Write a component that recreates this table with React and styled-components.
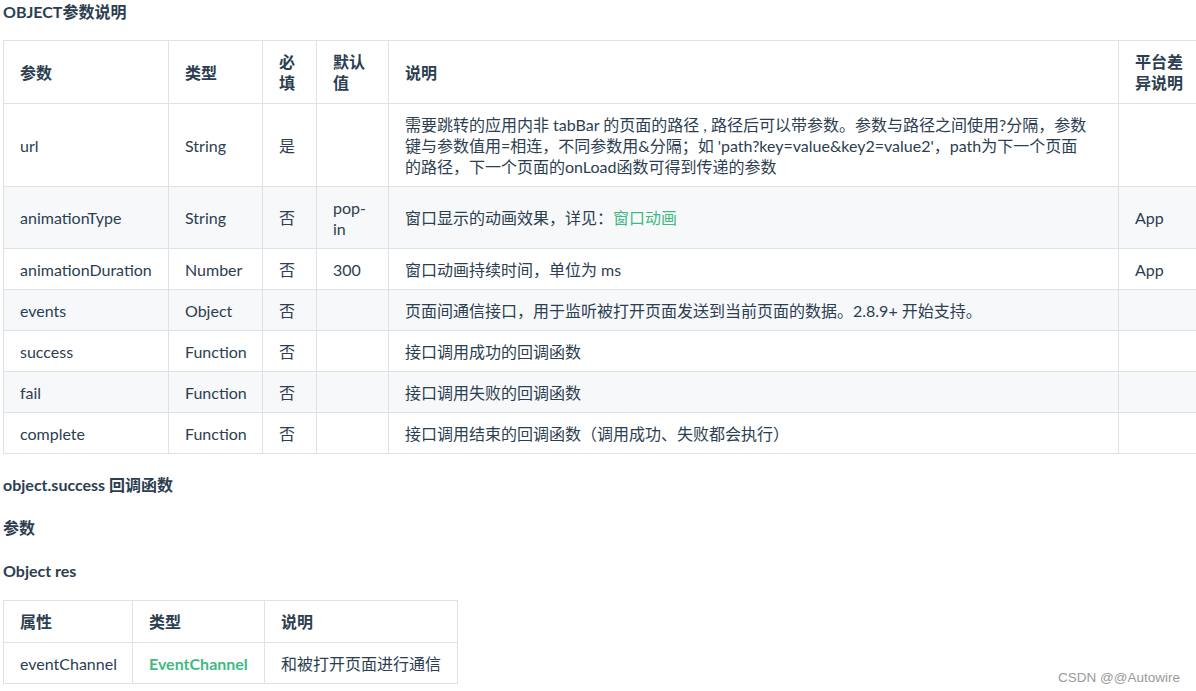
import React from 'react';
import styled, { createGlobalStyle } from 'styled-components';

const Global = createGlobalStyle`
  html, body {
    margin: 0;
    padding: 0;
    background: #fff;
    overflow: hidden;
  }
  body {
    font-family: Lato, "Noto Sans CJK SC", sans-serif;
    color: #2c3e50;
  }
`;

const Page = styled.div`
  position: relative;
  width: 1196px;
  height: 691px;
  overflow: hidden;
  padding: 1px 0 0 3px;
  box-sizing: border-box;
`;

const Heading = styled.div`
  font-size: 16px;
  line-height: 21px;
  font-weight: bold;
  margin-bottom: ${(p) => p.gap || 22}px;
`;

const Table = styled.table`
  border-collapse: collapse;
  table-layout: fixed;
  width: ${(p) => p.width}px;
  font-size: 16px;
  line-height: 21px;
  margin-bottom: ${(p) => p.gap || 0}px;
`;

const Th = styled.th`
  border: 1px solid #dfe2e5;
  padding: 10px 16px;
  text-align: left;
  font-weight: bold;
  vertical-align: middle;
`;

const Td = styled.td`
  border: 1px solid #dfe2e5;
  padding: 9.5px ${(p) => (p.$desc ? 28 : 16)}px 9.5px 16px;
  text-align: left;
  vertical-align: middle;
  word-break: normal;
  overflow-wrap: normal;
`;

const Tr = styled.tr`
  &:nth-child(2n) {
    background: #f6f8fa;
  }
`;

const Link = styled.span`
  color: #42b983;
  font-weight: ${(p) => (p.$bold ? 'bold' : 'normal')};
`;

const Watermark = styled.div`
  position: absolute;
  right: 16px;
  bottom: 6px;
  font-family: "Liberation Sans", Arial, sans-serif;
  font-size: 13.5px;
  color: #9a9a9a;
`;

const params = [
  {
    name: 'url',
    type: 'String',
    req: '是',
    def: '',
    desc: "需要跳转的应用内非 tabBar 的页面的路径 , 路径后可以带参数。参数与路径之间使用?分隔，参数键与参数值用=相连，不同参数用&分隔；如 'path?key=value&key2=value2'，path为下一个页面的路径，下一个页面的onLoad函数可得到传递的参数",
    plat: '',
  },
  {
    name: 'animationType',
    type: 'String',
    req: '否',
    def: 'pop-in',
    desc: (
      <>
        窗口显示的动画效果，详见：<Link>窗口动画</Link>
      </>
    ),
    plat: 'App',
  },
  { name: 'animationDuration', type: 'Number', req: '否', def: '300', desc: '窗口动画持续时间，单位为 ms', plat: 'App' },
  { name: 'events', type: 'Object', req: '否', def: '', desc: '页面间通信接口，用于监听被打开页面发送到当前页面的数据。2.8.9+ 开始支持。', plat: '' },
  { name: 'success', type: 'Function', req: '否', def: '', desc: '接口调用成功的回调函数', plat: '' },
  { name: 'fail', type: 'Function', req: '否', def: '', desc: '接口调用失败的回调函数', plat: '' },
  { name: 'complete', type: 'Function', req: '否', def: '', desc: '接口调用结束的回调函数（调用成功、失败都会执行）', plat: '' },
];

export default function App() {
  return (
    <Page>
      <Global />
      <Heading gap={18}>OBJECT参数说明</Heading>
      <Table width={1200} gap={20}>
        <colgroup>
          <col style={{ width: 165 }} />
          <col style={{ width: 94 }} />
          <col style={{ width: 54 }} />
          <col style={{ width: 72 }} />
          <col style={{ width: 730 }} />
          <col style={{ width: 85 }} />
        </colgroup>
        <thead>
          <tr>
            <Th>参数</Th>
            <Th>类型</Th>
            <Th>必填</Th>
            <Th>默认值</Th>
            <Th>说明</Th>
            <Th>平台差异说明</Th>
          </tr>
        </thead>
        <tbody>
          {params.map((p) => (
            <Tr key={p.name}>
              <Td>{p.name}</Td>
              <Td>{p.type}</Td>
              <Td>{p.req}</Td>
              <Td>{p.def}</Td>
              <Td $desc>{p.desc}</Td>
              <Td>{p.plat}</Td>
            </Tr>
          ))}
        </tbody>
      </Table>
      <Heading>object.success 回调函数</Heading>
      <Heading>参数</Heading>
      <Heading gap={19}>Object res</Heading>
      <Table width={454}>
        <colgroup>
          <col style={{ width: 129 }} />
          <col style={{ width: 132 }} />
          <col style={{ width: 193 }} />
        </colgroup>
        <thead>
          <tr>
            <Th>属性</Th>
            <Th>类型</Th>
            <Th>说明</Th>
          </tr>
        </thead>
        <tbody>
          <Tr>
            <Td>eventChannel</Td>
            <Td>
              <Link $bold>EventChannel</Link>
            </Td>
            <Td>和被打开页面进行通信</Td>
          </Tr>
        </tbody>
      </Table>
      <Watermark>CSDN @@Autowire</Watermark>
    </Page>
  );
}
